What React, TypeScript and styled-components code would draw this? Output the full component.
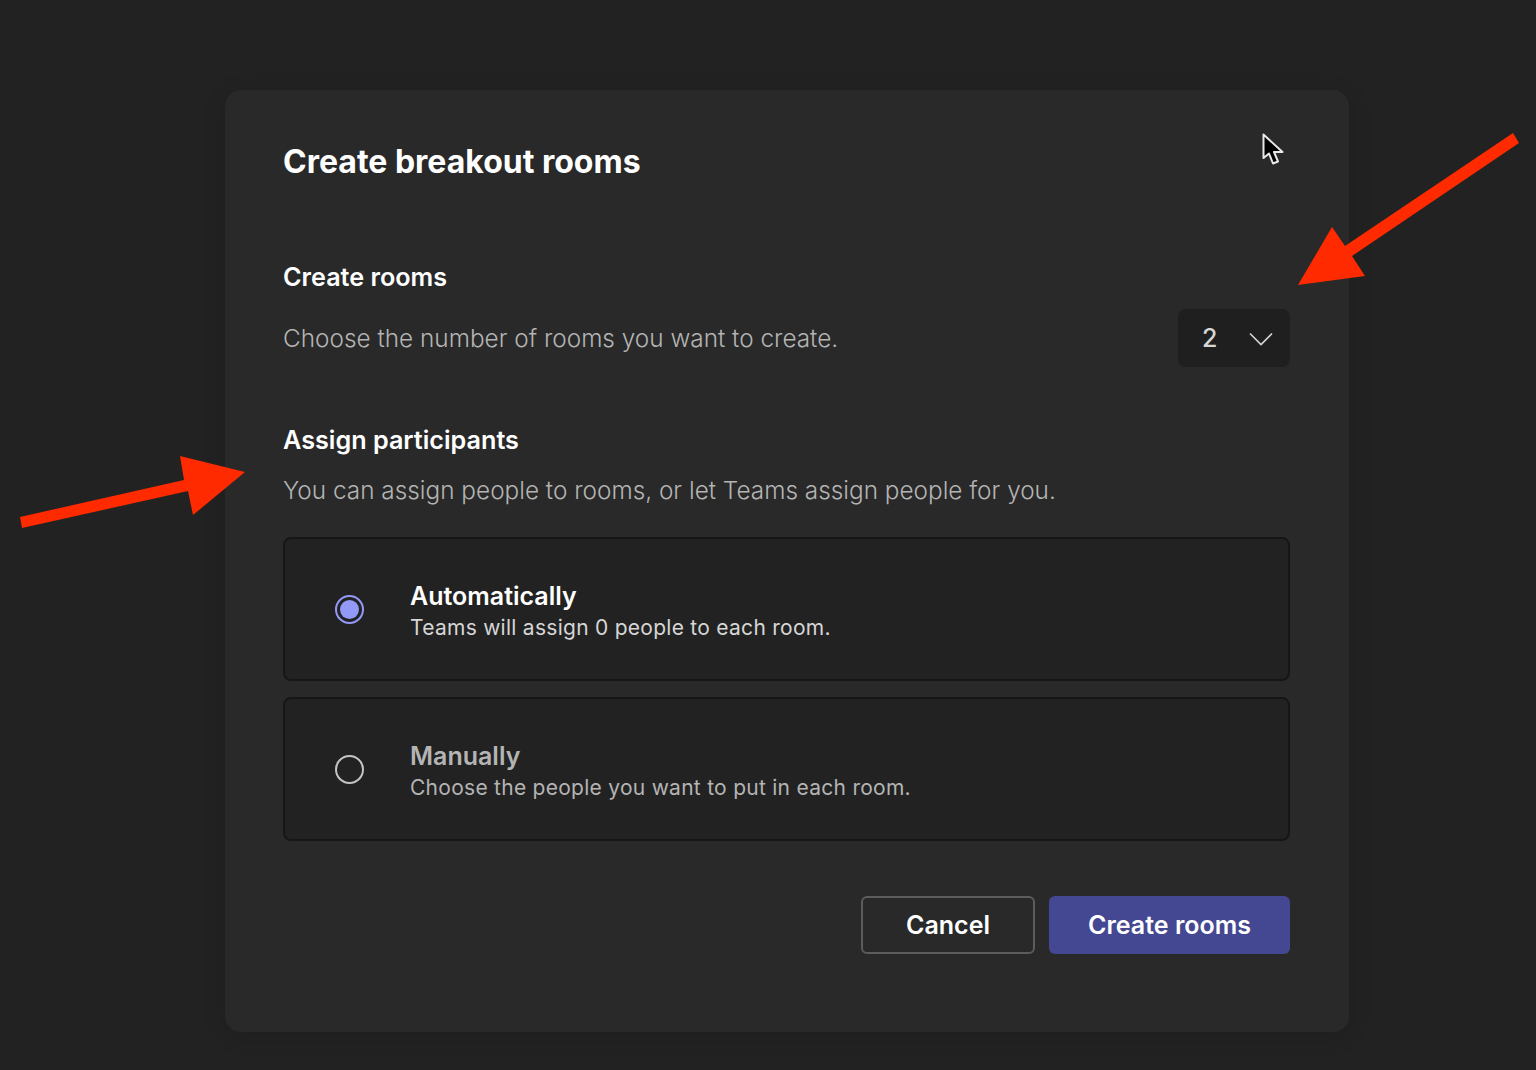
import styled, { createGlobalStyle } from 'styled-components';

const GlobalStyle = createGlobalStyle`
    html, body {
        margin: 0;
        padding: 0;
        background: #222222;
    }

    * {
        box-sizing: border-box;
    }
`;

const Page = styled.div`
    position: relative;
    width: 1536px;
    height: 1070px;
    padding: 90px 187px 38px 225px;
    overflow: hidden;
    background: #222222;
    font-family: Inter, 'Noto Sans', sans-serif;
`;

const Dialog = styled.section`
    display: flex;
    flex-direction: column;
    height: 942px;
    padding: 50px 59px 0 58px;
    background: #292929;
    border-radius: 16px;
    box-shadow: 0 4px 24px rgba(0, 0, 0, 0.12);
`;

const Title = styled.h1`
    margin: 0;
    height: 44px;
    font-size: 32px;
    line-height: 44px;
    font-weight: 700;
    color: #ffffff;
`;

const SectionName = styled.h2<{ $top: number }>`
    margin: ${(props) => props.$top}px 0 0;
    height: 34px;
    font-size: 25.2px;
    line-height: 34px;
    font-weight: 600;
    color: #ffffff;
`;

const Desc = styled.p`
    margin: 0;
    font-size: 24.35px;
    line-height: 34px;
    font-weight: 300;
    color: #b4b4b4;
`;

const RoomRow = styled.div`
    display: flex;
    justify-content: space-between;
    align-items: center;
    margin-top: 15px;
`;

const Select = styled.div`
    display: flex;
    justify-content: space-between;
    align-items: center;
    width: 112px;
    height: 58px;
    padding: 0 17px 0 24px;
    background: #1f1f1f;
    border-radius: 8px;
    font-size: 25px;
    font-weight: 500;
    color: #d6d6d6;
`;

const Chevron = styled.svg`
    margin-top: 2px;
`;

const AssignDesc = styled(Desc)`
    margin-top: 16px;
`;

const Options = styled.div`
    display: flex;
    flex-direction: column;
    gap: 16px;
    margin-top: 30px;
`;

const Option = styled.div`
    display: flex;
    align-items: center;
    height: 144px;
    padding: 0 50px;
    background: #222222;
    border: 2px solid #161616;
    border-radius: 8px;
`;

const Radio = styled.span<{ $checked?: boolean }>`
    flex: none;
    width: 29px;
    height: 29px;
    padding: 3px;
    border-radius: 50%;
    border: 2px solid ${(props) => (props.$checked ? '#9299f7' : '#c4c4c4')};
    background-clip: content-box;
    background-color: ${(props) => (props.$checked ? '#9299f7' : 'transparent')};
`;

const OptionText = styled.div`
    display: flex;
    flex-direction: column;
    margin-left: 46px;
    padding-top: 6px;
`;

const OptionName = styled.div<{ $muted?: boolean }>`
    height: 30px;
    font-size: 25px;
    line-height: 30px;
    font-weight: 600;
    color: ${(props) => (props.$muted ? '#b4b4b4' : '#ffffff')};
`;

const OptionHint = styled.div<{ $muted?: boolean }>`
    margin-top: 2px;
    font-size: 21px;
    line-height: 30px;
    letter-spacing: 0.27px;
    color: ${(props) => (props.$muted ? '#b4b4b4' : '#d6d6d6')};
`;

const Actions = styled.div`
    display: flex;
    justify-content: flex-end;
    gap: 14px;
    margin-top: 55px;
`;

const Button = styled.button<{ $primary?: boolean }>`
    height: 58px;
    width: ${(props) => (props.$primary ? '241px' : '174px')};
    padding: 0;
    border-radius: 6px;
    border: ${(props) => (props.$primary ? 'none' : '2px solid #5c5c5c')};
    background: ${(props) => (props.$primary ? '#444791' : 'transparent')};
    font-family: inherit;
    font-size: 25px;
    font-weight: 600;
    color: #ffffff;
`;

const Overlay = styled.svg`
    position: absolute;
    left: 0;
    top: 0;
    pointer-events: none;
`;

const Pointer = styled.svg`
    position: absolute;
    left: 1260px;
    top: 132px;
`;

const App = () => {
    return (
        <Page>
            <GlobalStyle />
            <Dialog>
                <Title>Create breakout rooms</Title>
                <SectionName $top={76}>Create rooms</SectionName>
                <RoomRow>
                    <Desc>Choose the number of rooms you want to create.</Desc>
                    <Select>
                        2
                        <Chevron width="24" height="14" viewBox="0 0 24 14" fill="none">
                            <path d="M1 1.5 L12 12.5 L23 1.5" stroke="#d6d6d6" strokeWidth="1.6" />
                        </Chevron>
                    </Select>
                </RoomRow>
                <SectionName $top={56}>Assign participants</SectionName>
                <AssignDesc>You can assign people to rooms, or let Teams assign people for you.</AssignDesc>
                <Options>
                    <Option>
                        <Radio $checked />
                        <OptionText>
                            <OptionName>Automatically</OptionName>
                            <OptionHint>Teams will assign 0 people to each room.</OptionHint>
                        </OptionText>
                    </Option>
                    <Option>
                        <Radio />
                        <OptionText>
                            <OptionName $muted>Manually</OptionName>
                            <OptionHint $muted>Choose the people you want to put in each room.</OptionHint>
                        </OptionText>
                    </Option>
                </Options>
                <Actions>
                    <Button>Cancel</Button>
                    <Button $primary>Create rooms</Button>
                </Actions>
            </Dialog>
            <Pointer width="28" height="38" viewBox="0 0 28 38">
                <path
                    d="M3.5 2.5 L3.5 26 L9 21.5 L13 31.5 L18 29.5 L14 20 L22.5 20 Z"
                    fill="#000000"
                    stroke="#e8e8e8"
                    strokeWidth="2"
                    strokeLinejoin="round"
                />
            </Pointer>
            <Overlay width="1536" height="1070" viewBox="0 0 1536 1070">
                <polygon
                    points="1513,133 1519,143 1352,256 1365,276 1298,285 1332,227 1345,246"
                    fill="#ff2a00"
                />
                <polygon
                    points="20,517 184,480 180,456 245,472 193,515 188,491 22,528"
                    fill="#ff2a00"
                />
            </Overlay>
        </Page>
    );
};

export default App;
